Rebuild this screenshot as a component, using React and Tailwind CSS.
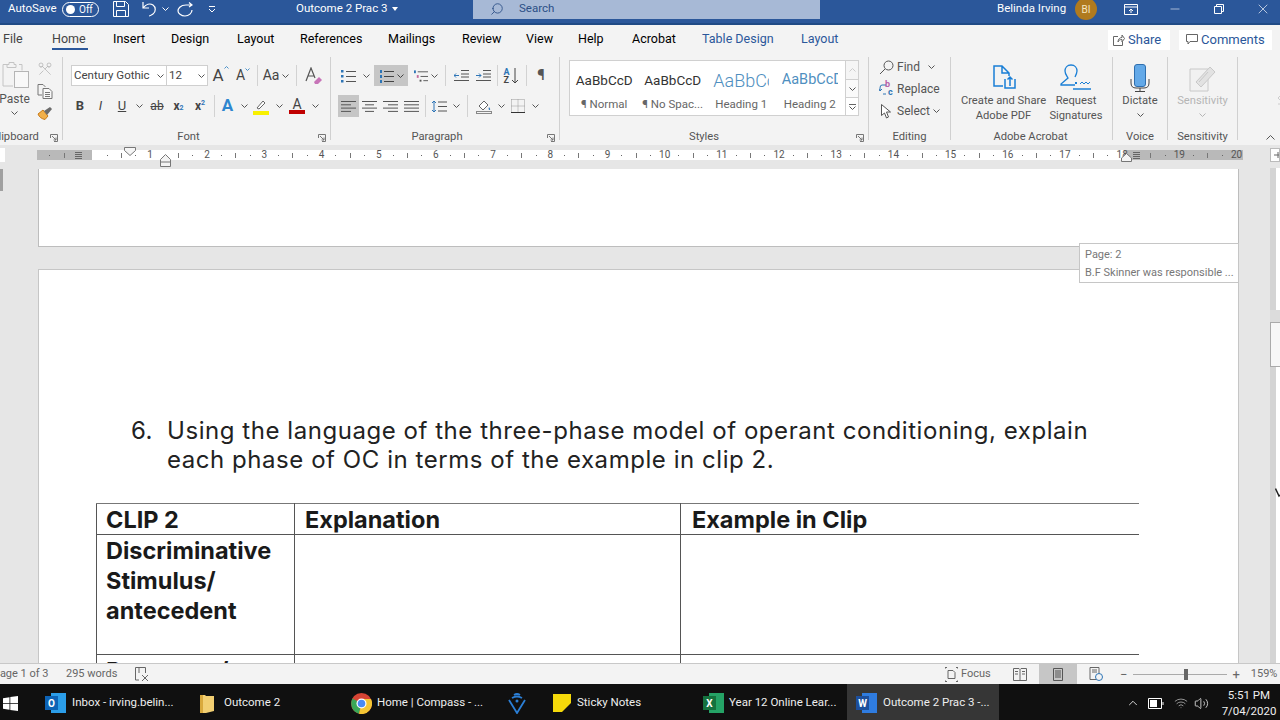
import {
  Scissors,
  Search,
  Minus,
  X,
  ChevronUp,
  Volume2,
  Wifi,
} from "lucide-react";

const ui = { fontFamily: "Roboto, 'Noto Sans', sans-serif" };
const docFont = { fontFamily: "Inter, 'Liberation Sans', sans-serif" };

const Chev = ({ className = "text-[#555]" }) => (
  <svg width="7" height="4" viewBox="0 0 7 4" className={className}>
    <path d="M.5.5l3 3 3-3" fill="none" stroke="currentColor" />
  </svg>
);

const Cell = ({ className = "", children }) => (
  <div className={`flex h-full shrink-0 items-center justify-center ${className}`}>{children}</div>
);

const Sep = ({ className }) => (
  <Cell className={className}>
    <div className="h-full w-px bg-[#d2d2d2]" />
  </Cell>
);

const Launcher = () => (
  <svg width="8" height="8" viewBox="0 0 8 8" className="absolute bottom-[-2px] right-[4px] text-[#777]">
    <path d="M.5 4V.5H7.5V7.5H4M2 2l4 4M6 3.500V6H3.500" fill="none" stroke="currentColor" />
  </svg>
);

// horizontal text lines used by the paragraph buttons
const Lines = ({ rows }) => (
  <svg width="15" height="13" viewBox="0 0 15 13" className="text-[#555]">
    {rows.map(([a, b], i) => (
      <path key={i} d={`M${a} ${1.5 + i * 3.3}H${b}`} stroke="currentColor" />
    ))}
  </svg>
);

const Group = ({ label, className = "", launcher = true, labelClass = "", children }) => (
  <div className={`relative mt-[5px] flex h-[83px] shrink-0 flex-col border-r border-[#d0d0d0] ${className}`}>
    <div className="flex-1">{children}</div>
    <div className={`-mb-[4px] h-[14px] whitespace-nowrap text-center text-[11.200px] leading-[14px] text-[#555] ${labelClass}`}>{label}</div>
    {launcher && <Launcher />}
  </div>
);

const PasteIcon = () => (
  <svg width="28" height="30" viewBox="0 0 28 30" className="text-[#c4c4c4]">
    <path d="M1 4.500h6M17 4.500h3v6M1 4.500V26h10" fill="none" stroke="currentColor" />
    <path d="M7 2.500h5v2h2v3H5v-3h2z" fill="#f3f3f3" stroke="currentColor" />
    <rect x="12.500" y="11.500" width="14" height="16" fill="#f8f8f8" stroke="#b5b5b5" />
  </svg>
);

const CopyIcon = () => (
  <svg width="16" height="15" viewBox="0 0 16 15" className="text-[#777]">
    <path d="M1 .5h5l2 2V3M1 .5V11h4" fill="none" stroke="currentColor" />
    <path d="M6 4.500h6l3 3v7H6zM8 8.500h5M8 10.500h5M8 12.500h5" fill="#f8f8f8" stroke="currentColor" />
  </svg>
);

const BrushIcon = () => (
  <svg width="16" height="15" viewBox="0 0 16 15">
    <path d="M1 8l5-4 5 6-3 3.500C5 13 2 11 1 8z" fill="#f2b04a" stroke="#c77a18" />
    <path d="M7 5l6-4 2 2-5 6z" fill="#6b6b6b" />
  </svg>
);

const SmallA = ({ big, up }) => (
  <span className={`relative text-[#444] ${big ? "text-[17px]" : "text-[14px]"}`}>
    A
    <svg width="5" height="3" viewBox="0 0 5 3" className="absolute right-[-5px] top-[3px] text-[#4a90c8]">
      <path d={up ? "M.5 2.500l2-2 2 2" : "M.5.5l2 2 2-2"} fill="none" stroke="currentColor" />
    </svg>
  </span>
);

const BulletIcon = () => (
  <svg width="15" height="14" viewBox="0 0 15 14">
    {[1, 6, 11].map((y) => (
      <g key={y}>
        <rect x="0" y={y} width="2.500" height="2.500" fill="#2e75b6" />
        <path d={`M5 ${y + 1.5}H15`} stroke="#555" />
      </g>
    ))}
  </svg>
);

const NumberIcon = () => (
  <svg width="15" height="14" viewBox="0 0 15 14">
    {[1, 6, 11].map((y) => (
      <g key={y}>
        <rect x="1" y={y} width="2" height="3" fill="#2e75b6" />
        <path d={`M5 ${y + 1.5}H15`} stroke="#444" />
      </g>
    ))}
  </svg>
);

const MultiIcon = () => (
  <svg width="15" height="14" viewBox="0 0 15 14">
    <rect x="0" y="1" width="2" height="3" fill="#2e75b6" />
    <rect x="3" y="6" width="2" height="3" fill="#c06a9a" />
    <rect x="6" y="11" width="2" height="2" fill="#555" />
    <path d="M4 2.500H15M7 7.500H15M10 12H15" stroke="#555" />
  </svg>
);

const IndentIcon = ({ flip }) => (
  <svg width="15" height="11" viewBox="0 0 15 11">
    <path d="M7 .5H15M7 4H15M7 7H15M0 10.500H15" stroke="#555" />
    <path d={flip ? "M0 5.500h5M3 3.500l2 2-2 2" : "M5 5.500H0M2 3.500l-2 2 2 2"} fill="none" stroke="#2e75b6" />
  </svg>
);

const SortIcon = () => (
  <div className="relative flex items-center">
    <div className="flex flex-col text-[9px] font-bold leading-[8px]">
      <span className="text-[#2e75b6]">A</span>
      <span className="text-[#444]">Z</span>
    </div>
    <svg width="8" height="16" viewBox="0 0 8 16" className="ml-[1px]">
      <path d="M4 0v15M1 12l3 3 3-3" fill="none" stroke="#444" />
    </svg>
  </div>
);

const LineSpaceIcon = () => (
  <svg width="16" height="13" viewBox="0 0 16 13">
    <path d="M3 1v11M1 3l2-2 2 2M1 10l2 2 2-2" fill="none" stroke="#2e75b6" />
    <path d="M7 2H16M7 6.500H16M7 11H16" stroke="#555" />
  </svg>
);

const ShadingIcon = () => (
  <svg width="16" height="15" viewBox="0 0 16 15">
    <path d="M3 7l5-5 4 4-5 5z" fill="#fff" stroke="#666" />
    <path d="M13 8c1 1.500 1.500 2 1 3-1 .5-2-1-1-3z" fill="#2e75b6" />
    <rect x="0.500" y="12.500" width="15" height="2" fill="#f3f3f3" stroke="#888" />
  </svg>
);

const BordersIcon = () => (
  <svg width="14" height="14" viewBox="0 0 14 14">
    <path d="M.5.5h13v13M.5.5v13M7 .5v13M.5 7h13" fill="none" stroke="#999" strokeDasharray="1 1" />
    <path d="M0 13.500h14" stroke="#333" />
  </svg>
);

const FontNameBox = ({ className, text }) => (
  <div className={`flex h-full shrink-0 items-center justify-between border border-[#cfcfcf] bg-white px-[2px] text-[11.500px] text-[#444] ${className}`}>
    <span className="whitespace-nowrap">{text}</span>
    <Chev />
  </div>
);

const FontGroup = () => (
  <Group label="Font" className="w-[268px]" labelClass="pr-[16px]">
    <div className="ml-[8px] mt-[8px] flex h-[21px]">
      <FontNameBox className="w-[96px]" text="Century Gothic" />
      <FontNameBox className="w-[41px] border-l-0" text="12" />
      <Cell className="w-[22px] pr-[2px]">
        <SmallA big up />
      </Cell>
      <Cell className="w-[24px] pr-[3px]">
        <SmallA />
      </Cell>
      <Sep className="w-[7px]" />
      <Cell className="w-[30px] gap-[3px] text-[14px] text-[#444]">
        Aa
        <Chev />
      </Cell>
      <Sep className="w-[11px]" />
      <Cell className="w-[24px]">
        <svg width="18" height="18" viewBox="0 0 18 18">
          <path d="M1 14L6 1l4 10M3 9h6" fill="none" stroke="#555" strokeWidth="1.200" />
          <path d="M9 15l5-5 3 3-4 4h-3z" fill="#c774b8" />
        </svg>
      </Cell>
    </div>
    <div className="ml-[8px] mt-[9px] flex h-[22px] text-[#444]">
      <Cell className="w-[18px] text-[13px] font-bold">B</Cell>
      <Cell className="w-[23px] text-[13px] italic">I</Cell>
      <Cell className="w-[20px] text-[13px] underline">U</Cell>
      <Cell className="w-[14px]">
        <Chev />
      </Cell>
      <Cell className="w-[22px] text-[12px] line-through">ab</Cell>
      <Cell className="w-[21px] text-[12px] font-bold">
        x<sub className="text-[7px] text-[#2e75b6]">2</sub>
      </Cell>
      <Cell className="w-[22px] text-[12px] font-bold">
        x<sup className="text-[7px] text-[#2e75b6]">2</sup>
      </Cell>
      <Sep className="w-[6px]" />
      <Cell className="w-[21px] text-[17px] font-bold text-[#2e86cf]">A</Cell>
      <Cell className="w-[12px]">
        <Chev />
      </Cell>
      <Cell className="w-[22px]">
        <svg width="16" height="17" viewBox="0 0 16 17">
          <path d="M4 10l6-7 2 2-6 6z" fill="#fff" stroke="#666" />
          <rect x="0" y="13" width="16" height="4" fill="#f8f000" />
        </svg>
      </Cell>
      <Cell className="w-[14px]">
        <Chev />
      </Cell>
      <Cell className="w-[22px]">
        <div className="flex flex-col items-center leading-[12px]">
          <span className="text-[14px] text-[#444]">A</span>
          <div className="h-[4px] w-[16px] bg-[#c00000]" />
        </div>
      </Cell>
      <Cell className="w-[14px]">
        <Chev />
      </Cell>
    </div>
  </Group>
);

const ParagraphGroup = () => (
  <Group label="Paragraph" className="w-[229px]" labelClass="pr-[16px]">
    <div className="ml-[7px] mt-[8px] flex h-[21px]">
      <Cell className="w-[20px]">
        <BulletIcon />
      </Cell>
      <Cell className="w-[16px]">
        <Chev />
      </Cell>
      <Cell className="w-[34px] gap-[3px] bg-[#c6c6c6]">
        <NumberIcon />
        <Chev className="text-[#444]" />
      </Cell>
      <Cell className="ml-[6px] w-[14px]">
        <MultiIcon />
      </Cell>
      <Cell className="w-[12px]">
        <Chev />
      </Cell>
      <Sep className="w-[10px]" />
      <Cell className="w-[22px]">
        <IndentIcon />
      </Cell>
      <Cell className="w-[22px]">
        <IndentIcon flip />
      </Cell>
      <Sep className="w-[6px]" />
      <Cell className="w-[22px]">
        <SortIcon />
      </Cell>
      <Sep className="w-[8px]" />
      <Cell className="w-[22px] text-[15px] font-bold text-[#555]">¶</Cell>
    </div>
    <div className="ml-[7px] mt-[9px] flex h-[22px]">
      <Cell className="w-[21px] bg-[#c6c6c6]">
        <Lines rows={[[0, 15], [0, 10], [0, 15], [0, 10]]} />
      </Cell>
      <Cell className="w-[21px]">
        <Lines rows={[[0, 15], [3, 12], [0, 15], [3, 12]]} />
      </Cell>
      <Cell className="w-[21px]">
        <Lines rows={[[0, 15], [5, 15], [0, 15], [5, 15]]} />
      </Cell>
      <Cell className="w-[21px]">
        <Lines rows={[[0, 15], [0, 15], [0, 15], [0, 15]]} />
      </Cell>
      <Sep className="w-[6px]" />
      <Cell className="w-[22px]">
        <LineSpaceIcon />
      </Cell>
      <Cell className="w-[12px]">
        <Chev />
      </Cell>
      <Sep className="w-[11px]" />
      <Cell className="w-[22px]">
        <ShadingIcon />
      </Cell>
      <Cell className="w-[12px]">
        <Chev />
      </Cell>
      <Cell className="w-[22px]">
        <BordersIcon />
      </Cell>
      <Cell className="w-[12px]">
        <Chev />
      </Cell>
    </div>
  </Group>
);

const StyleItem = ({ preview, previewClass, label }) => (
  <div className="flex w-[68.500px] shrink-0 flex-col items-center">
    <div className={`flex h-[28px] items-center overflow-hidden whitespace-nowrap ${previewClass}`}>{preview}</div>
    <div className="mt-[3px] whitespace-nowrap text-[11.500px] leading-[14px] text-[#666]">{label}</div>
  </div>
);

const StylesGroup = () => (
  <Group label="Styles" className="w-[309px]" labelClass="pr-[20px]">
    <div className="ml-[9px] mt-[3px] flex h-[56px] w-[290px] border border-[#d0d0d0] bg-white">
      <div className="flex flex-1 items-start pt-[5px]">
        <StyleItem preview="AaBbCcD" previewClass="w-[60px] justify-center text-[13.500px] text-[#333]" label="¶ Normal" />
        <StyleItem preview="AaBbCcD" previewClass="w-[60px] justify-center text-[13.500px] text-[#333]" label="¶ No Spac..." />
        <StyleItem preview="AaBbCcD" previewClass="w-[56px] text-[18px] font-light text-[#4f8fc0]" label="Heading 1" />
        <StyleItem preview="AaBbCcD" previewClass="w-[56px] text-[14.500px] text-[#4f8fc0]" label="Heading 2" />
      </div>
      <div className="flex w-[13px] flex-col border-l border-[#d0d0d0] text-[#777]">
        <div className="flex h-[18px] items-center justify-center bg-[#f5f5f5]">
          <svg width="7" height="4" viewBox="0 0 7 4" className="text-[#ccc]">
            <path d="M.5 3.500l3-3 3 3" fill="none" stroke="currentColor" />
          </svg>
        </div>
        <div className="flex h-[19px] items-center justify-center border-y border-[#d0d0d0] bg-[#fafafa]">
          <Chev />
        </div>
        <div className="flex flex-1 flex-col items-center justify-center gap-[1px]">
          <div className="h-px w-[7px] bg-[#666]" />
          <Chev />
        </div>
      </div>
    </div>
  </Group>
);

const FindIcon = () => (
  <svg width="15" height="15" viewBox="0 0 15 15">
    <circle cx="9.500" cy="5.500" r="4.500" fill="none" stroke="#555" />
    <path d="M6 9L1 14" stroke="#555" />
  </svg>
);

const ReplaceIcon = () => (
  <div className="relative flex h-[14px] w-[15px] items-center text-[9px] font-bold leading-none">
    <svg width="8" height="11" viewBox="0 0 8 11">
      <path d="M7 1H3Q1 1 1 4v3M1 7l2-2M1 7l-1-2M7 10H4" fill="none" stroke="#2e75b6" />
    </svg>
    <span className="absolute left-[6px] top-[-2px] text-[#b660a8]">b</span>
    <span className="absolute left-[9px] top-[6px] text-[#2e75b6]">c</span>
  </div>
);

const SelectIcon = () => (
  <svg width="11" height="15" viewBox="0 0 11 15">
    <path d="M.5.5v11l3-2.500 2 5 2-1-2-5h4z" fill="#fff" stroke="#555" />
  </svg>
);

const EditRow = ({ icon, text, chev, chevClass = "ml-[3px]" }) => (
  <div className="flex h-[22px] items-center text-[12px] text-[#555]">
    <div className="flex w-[17px] shrink-0 justify-center">{icon}</div>
    <span className="ml-[2px]">{text}</span>
    {chev && (
      <span className={chevClass}>
        <Chev />
      </span>
    )}
  </div>
);

const EditingGroup = () => (
  <Group label="Editing" className="w-[82px]" launcher={false}>
    <div className="mt-[-1px] pl-[9px]">
      <EditRow icon={<FindIcon />} text="Find" chev chevClass="ml-[8px]" />
      <EditRow icon={<ReplaceIcon />} text="Replace" />
      <EditRow icon={<SelectIcon />} text="Select" chev />
    </div>
  </Group>
);

const BigLabel = ({ children, className = "text-[#555]" }) => (
  <div className={`whitespace-nowrap text-center text-[11.200px] leading-[15px] ${className}`}>{children}</div>
);

const PdfIcon = () => (
  <svg width="24" height="26" viewBox="0 0 24 26" fill="none" stroke="#1a7fd6" strokeWidth="1.500">
    <path d="M11 21H2V1h8l7 7v3M10 1v7h7" />
    <path d="M13 14v9h10v-9M18 21v-9M15.500 14.500l2.500-2.500 2.500 2.500" />
  </svg>
);

const SignIcon = () => (
  <svg width="32" height="27" viewBox="0 0 32 27" fill="none" stroke="#1a7fd6" strokeWidth="1.300">
    <path d="M11 1c-4 0-6 3-6 6 0 3 2 5 3 7l-7 6v1h14M11 1c4 0 6 3 6 6 0 2-1 4-2 6" />
    <path d="M15 18l2 2M17 18l-2 2M20 20l2-2 2 2 2-2 2 2 2-2" strokeWidth="1" />
    <path d="M13 25h18" strokeWidth="1.500" />
  </svg>
);

const AdobeGroup = () => (
  <Group label="Adobe Acrobat" className="w-[162px]" launcher={false} labelClass="pr-[2px]">
    <div className="flex pt-[5px]">
      <div className="flex w-[105px] flex-col items-center">
        <div className="flex h-[31px] items-center">
          <PdfIcon />
        </div>
        <BigLabel>Create and Share</BigLabel>
        <BigLabel>Adobe PDF</BigLabel>
      </div>
      <div className="flex w-[40px] flex-col items-center">
        <div className="flex h-[31px] items-center">
          <SignIcon />
        </div>
        <BigLabel>Request</BigLabel>
        <BigLabel>Signatures</BigLabel>
      </div>
    </div>
  </Group>
);

const VoiceGroup = () => (
  <Group label="Voice" className="w-[55px]" launcher={false}>
    <div className="flex flex-col items-center pt-[5px]">
      <div className="flex h-[31px] items-center">
        <svg width="20" height="28" viewBox="0 0 20 28">
          <rect x="4.500" y="0.500" width="11" height="22" rx="2.500" fill="#63a9e8" stroke="#2f6fae" />
          <path d="M1 15v4q0 5 5 5h8q5 0 5-5v-4M10 24v3M5 27.500h10" fill="none" stroke="#444" />
        </svg>
      </div>
      <BigLabel>Dictate</BigLabel>
      <div className="mt-[5px]">
        <Chev />
      </div>
    </div>
  </Group>
);

const SensitivityGroup = () => (
  <Group label="Sensitivity" className="w-[70px]" launcher={false}>
    <div className="flex flex-col items-center pt-[5px]">
      <div className="flex h-[31px] items-center">
        <svg width="27" height="28" viewBox="0 0 27 28" fill="none" stroke="#c8c8c8">
          <path d="M3 5h16v22H1V5z" fill="#f1f1f1" />
          <path d="M7 18L21 3l5 5-14 15z" fill="#e2e2e2" />
          <path d="M10 18l9-10" />
        </svg>
      </div>
      <BigLabel className="text-[#b5b5b5]">Sensitivity</BigLabel>
      <div className="mt-[5px]">
        <Chev className="text-[#b5b5b5]" />
      </div>
    </div>
  </Group>
);

const TitleBar = () => (
  <div className="flex h-[25px] shrink-0 items-start border-b-[2px] border-[#204a85] bg-[#2b579a] text-[11.500px] text-white">
    <div className="flex h-[18px] items-center pl-[8px]">
      <span className="w-[54px]">AutoSave</span>
      <div className="flex h-[15px] w-[37px] items-center gap-[4px] rounded-full border border-white pl-[3px] text-[10px]">
        <div className="h-[9px] w-[9px] rounded-full bg-white" />
        Off
      </div>
      <svg width="16" height="16" viewBox="0 0 16 16" className="ml-[14px]" fill="none" stroke="white">
        <path d="M.5.5h12l3 3v12H.5zM3.500.5v5h8v-5M3.500 15.500v-6h9v6" />
      </svg>
      <svg width="16" height="16" viewBox="0 0 16 16" className="ml-[13px]" fill="none" stroke="white" strokeWidth="1.200">
        <path d="M1 1v6h6M1 7c3-4 7-5 10-3s3 7 0 9-3 2-4 2" />
      </svg>
      <span className="ml-[4px]">
        <Chev className="text-white" />
      </span>
      <svg width="16" height="16" viewBox="0 0 16 16" className="ml-[8px]" fill="none" stroke="white" strokeWidth="1.200">
        <path d="M12 1.500L15 4l-3 2M15 4H9C3 4 1 8 1 10s3 5 7 5 7-3 7-6" />
      </svg>
      <svg width="8" height="7" viewBox="0 0 8 7" className="ml-[15px]" fill="none" stroke="white">
        <path d="M1 .5h6M1 3l3 3 3-3" />
      </svg>
    </div>
    <div className="ml-[80px] flex h-[18px] w-[177px] items-center gap-[5px]">
      <span>Outcome 2 Prac 3</span>
      <svg width="6" height="4" viewBox="0 0 6 4">
        <path d="M0 0h6L3 4z" fill="white" />
      </svg>
    </div>
    <div className="flex h-[19px] w-[347px] items-center bg-[#a7b9d6] pb-[2px] pl-[17px] text-[#2b4f86]">
      <Search size={14} className="-scale-x-100" strokeWidth={1.500} />
      <span className="ml-[15px] text-[11.500px]">Search</span>
    </div>
    <div className="ml-[177px] flex h-[18px] items-center">
      <span className="w-[78px] whitespace-nowrap">Belinda Irving</span>
      <div className="flex h-[22px] w-[22px] items-center justify-center rounded-full bg-[#b07a1e] text-[10px] text-[#f6e6c0]">BI</div>
      <svg width="14" height="11" viewBox="0 0 14 11" className="ml-[27px]" fill="none" stroke="white">
        <path d="M.5.500h13v10H.5zM.5 3h13M7 9V5M5 7l2-2 2 2" />
      </svg>
      <Minus size={14} className="ml-[30px]" strokeWidth={1} />
      <svg width="10" height="10" viewBox="0 0 10 10" className="ml-[32px]" fill="none" stroke="white">
        <path d="M.5 2.500h7v7h-7zM2.500 2.500v-2h7v7h-2" />
      </svg>
      <X size={16} className="ml-[31px]" strokeWidth={1} />
    </div>
  </div>
);

const Tab = ({ className = "text-[#444]", children }) => (
  <span className={`shrink-0 ${className}`}>{children}</span>
);

const TabsRow = () => (
  <div className="flex h-[27px] shrink-0 items-center bg-[#f3f3f3] pt-[2px] text-[12.500px]">
    <Tab className="ml-[3px] w-[49px] text-[#444]">File</Tab>
    <div className="relative w-[61px]">
      <span className="text-[#444]">Home</span>
      <div className="absolute left-0 top-[18px] h-[2px] w-[36px] bg-[#2b579a]" />
    </div>
    <Tab className="w-[58px]">Insert</Tab>
    <Tab className="w-[66px]">Design</Tab>
    <Tab className="w-[63px]">Layout</Tab>
    <Tab className="w-[88px]">References</Tab>
    <Tab className="w-[74px]">Mailings</Tab>
    <Tab className="w-[64px]">Review</Tab>
    <Tab className="w-[52px]">View</Tab>
    <Tab className="w-[54px]">Help</Tab>
    <Tab className="w-[70px]">Acrobat</Tab>
    <Tab className="w-[99px] text-[#2b579a]">Table Design</Tab>
    <Tab className="w-[307px] text-[#2b579a]">Layout</Tab>
    <div className="flex h-[20px] w-[62px] shrink-0 items-center gap-[3px] bg-white pl-[5px] text-[13px] text-[#2b579a]">
      <svg width="12" height="12" viewBox="0 0 12 12" fill="none" stroke="#666">
        <path d="M5 2.500H.5v9h9V8M5 8c0-3 2-4.500 4-4.500V1l2.500 3.500L9 8V5.500C7 5.500 6 6 5 8z" />
      </svg>
      Share
    </div>
    <div className="ml-[9px] flex h-[20px] w-[93px] shrink-0 items-center gap-[3px] bg-white pl-[7px] text-[13px] text-[#2b579a]">
      <svg width="12" height="11" viewBox="0 0 12 11" fill="none" stroke="#666">
        <path d="M.5.500h11v7H4L2 10V7.500H.5z" />
      </svg>
      Comments
    </div>
  </div>
);

const Ribbon = () => (
  <div className="flex h-[93px] shrink-0 bg-[#f3f3f3]">
    <Group label="Clipboard" className="w-[63px]" labelClass="ml-[-32px]">
      <div className="flex">
        <div className="flex w-[29px] flex-col items-center">
          <div className="ml-[3px] mt-[3px]">
            <PasteIcon />
          </div>
          <div className="mt-[2px] text-[12px] leading-[15px] text-[#555]">Paste</div>
          <div className="mt-[4px]">
            <Chev />
          </div>
        </div>
        <div className="ml-[7px] flex w-[17px] flex-col items-center gap-[7px] pt-[4px]">
          <Scissors size={16} className="rotate-90 text-[#aaa]" strokeWidth={1} />
          <CopyIcon />
          <BrushIcon />
        </div>
      </div>
    </Group>
    <FontGroup />
    <ParagraphGroup />
    <StylesGroup />
    <EditingGroup />
    <AdobeGroup />
    <VoiceGroup />
    <SensitivityGroup />
    <div className="relative flex-1">
      <svg width="4" height="12" viewBox="0 0 4 12" className="absolute left-[39px] top-[42px] text-[#ccc]">
        <path d="M4 1L1 4l3 3M1 10h3" fill="none" stroke="currentColor" />
      </svg>
      <svg width="9" height="5" viewBox="0 0 9 5" className="absolute bottom-[5px] left-[28px] text-[#555]">
        <path d="M.5 4.500l4-4 4 4" fill="none" stroke="currentColor" />
      </svg>
    </div>
  </div>
);

const Dot = () => <div className="h-[1px] w-[1px] bg-[#666]" />;
const Tick = () => <div className="h-[5px] w-px bg-[#777]" />;
const Hatch = () => <div className="h-[7px] w-[7px] bg-[repeating-linear-gradient(0deg,#666_0,#666_1px,transparent_1px,transparent_2px)]" />;

const RulerCell = ({ n }) => (
  <div className="grid w-[57.200px] shrink-0 grid-cols-4 items-center justify-items-center">
    <span className="text-[10px] leading-[10px] text-[#555]">{n}</span>
    {n === 18 ? <Hatch /> : <Dot />}
    <Tick />
    <Dot />
  </div>
);

const RULER_NUMBERS = Array.from({ length: 19 }, (_, i) => i + 1);

const Ruler = () => (
  <div className="relative h-[23px] shrink-0 bg-[#e6e6e6] pt-[5px]">
    <div className="absolute left-0 top-[3px] h-[14px] w-[5px] bg-white" />
    <div className="ml-[37px] flex h-[10px] w-[1206px] bg-[linear-gradient(90deg,#b9b9b9_55px,#fff_55px,#fff_1087px,#b9b9b9_1087px)] pl-[5.750px]">
      <div className="grid w-[100.100px] shrink-0 grid-cols-7 items-center justify-items-center">
        <Dot />
        <Tick />
        <Hatch />
        <span />
        <Dot />
        <Tick />
        <Dot />
      </div>
      {RULER_NUMBERS.map((n) => (
        <RulerCell key={n} n={n} />
      ))}
      <span className="w-[14.300px] shrink-0 text-center text-[10px] leading-[10px] text-[#555]">20</span>
    </div>
    {/* indent markers sit on top of the ruler */}
    <svg width="12" height="9" viewBox="0 0 12 9" className="absolute left-[124px] top-[2px]">
      <path d="M.5.500h11v3l-5.500 5-5.500-5z" fill="#f5f5f5" stroke="#777" />
    </svg>
    <svg width="11" height="13" viewBox="0 0 11 13" className="absolute left-[160px] top-[9px]">
      <path d="M.5 5.500l5-5 5 5v7H.5zM.5 8h10" fill="#f3f3f3" stroke="#777" />
    </svg>
    <svg width="11" height="9" viewBox="0 0 11 9" className="absolute left-[1121px] top-[8px]">
      <path d="M.5 5l5-4.500 5 4.500v3.500H.5z" fill="#f5f5f5" stroke="#777" />
    </svg>
    <div className="absolute left-[1270px] top-[3px] flex h-[14px] w-[10px] items-center border border-[#bbb] bg-white pl-[3px]">
      <svg width="5" height="6" viewBox="0 0 5 6">
        <path d="M4 0v6M0 3h5" stroke="#666" />
      </svg>
    </div>
  </div>
);

const Td = ({ className = "", children }) => (
  <td className={`h-[30px] border border-[#555] border-t-[#777] ${className}`}>{children}</td>
);

const DocTable = () => (
  <table className="ml-[57px] mt-[28px] w-[1042px] table-fixed border-collapse text-[23.500px] font-bold text-[#1a1a1a]" style={docFont}>
    <colgroup>
      <col className="w-[198px]" />
      <col className="w-[386px]" />
      <col className="w-[458px]" />
    </colgroup>
    <tbody>
      <tr className="leading-[28px]">
        <Td className="pl-[9px] pt-[2px]">CLIP 2</Td>
        <Td className="pl-[10px] pt-[2px]">Explanation</Td>
        <Td className="border-r-0 pl-[11px] pt-[2px]">Example in Clip</Td>
      </tr>
      <tr className="leading-[30px]">
        <Td className="h-[120px] pl-[9px] pt-[1px] align-top">
          Discriminative
          <br />
          Stimulus/
          <br />
          antecedent
        </Td>
        <Td />
        <Td className="border-r-0" />
      </tr>
      <tr className="leading-[30px]">
        <Td className="pl-[9px] pt-[1px] align-top">
          <div className="h-[8px] overflow-hidden">Response/</div>
        </Td>
        <Td />
        <Td className="border-r-0" />
      </tr>
    </tbody>
  </table>
);

const Document = () => (
  <div className="relative flex min-h-0 flex-1 bg-[#e6e6e6]">
    <div className="absolute left-0 top-[1px] h-[22px] w-[3px] bg-[#a0a0a0]" />
    <div className="flex w-[1270px] flex-col overflow-hidden pl-[38px] pr-[31px] pt-px">
      <div className="h-[78px] shrink-0 border-x border-b border-[#bdbdbd] bg-white" />
      <div className="mt-[22px] shrink-0 border-x border-t border-[#c6c6c6] bg-white pb-[200px]">
        <div className="ml-[92px] mt-[146px] flex w-[980px] text-[24px] leading-[29.400px] tracking-[0.55px] text-[#222]" style={docFont}>
          <span className="w-[36px] shrink-0">6.</span>
          <p>Using the language of the three-phase model of operant conditioning, explain each phase of OC in terms of the example in clip 2.</p>
        </div>
        <DocTable />
      </div>
    </div>
    {/* scrollbar and the window peeking out beside it */}
    <div className="relative w-[6px] bg-[#d4d4d4]" />
    <div className="w-[4px] bg-white" />
    <div className="absolute left-[1270px] top-[142px] h-[12px] w-[10px] bg-[#dcdcdc]" />
    <div className="absolute left-[1270px] top-[154px] h-[45px] w-[10px] border border-r-0 border-[#aaa] bg-[#f7f7f7]" />
    <svg width="5" height="12" viewBox="0 0 5 12" className="absolute left-[1275px] top-[320px]">
      <path d="M.5.500L4 8l1-1" fill="none" stroke="#222" strokeWidth="1.500" />
    </svg>
    {/* page hover tip */}
    <div className="absolute left-[1079px] top-[75px] h-[40px] w-[160px] border border-[#c6c6c6] bg-white px-[5px] pt-[2px] text-[11px] leading-[18px] text-[#777]">
      <div>Page: 2</div>
      <div className="whitespace-nowrap">B.F Skinner was responsible ...</div>
    </div>
  </div>
);

const StatusBar = () => (
  <div className="flex h-[21px] shrink-0 items-center border-t border-[#c8c8c8] bg-[#f3f3f3] text-[11px] text-[#666]">
    <span className="ml-[-7px] w-[73px] shrink-0 whitespace-nowrap">Page 1 of 3</span>
    <span className="w-[69px] shrink-0 whitespace-nowrap">295 words</span>
    <svg width="14" height="15" viewBox="0 0 14 15" fill="none" stroke="#666" className="shrink-0">
      <path d="M.5 13V.5h10V6M4 .5V6M.5 13H4M7 8l6 6M13 8l-6 6" />
    </svg>
    <svg width="13" height="15" viewBox="0 0 13 15" className="ml-[796px] shrink-0" fill="none" stroke="#666">
      <path d="M3 3.500h5l2 2v6H3zM0 2V.5h2M11 .5h2V2M0 13v1.500h2M11 14.500h2V13" />
    </svg>
    <span className="ml-[3px] w-[52px] shrink-0">Focus</span>
    <svg width="14" height="13" viewBox="0 0 14 13" fill="none" stroke="#666" className="shrink-0">
      <path d="M.5.500H6L7 1.500 8 .5h5.500v12H.5zM7 1.500v11M2 3.500h3M2 6h3M9 3.500h3M9 6h3" />
    </svg>
    <Cell className="ml-[12px] w-[38px] bg-[#c6c6c6]">
      <svg width="10" height="13" viewBox="0 0 10 13" fill="none" stroke="#555">
        <path d="M.5.500h9v12h-9zM2 3h6M2 5h6M2 7h6M2 9h6" />
      </svg>
    </Cell>
    <svg width="14" height="14" viewBox="0 0 14 14" className="ml-[12px] shrink-0" fill="none" stroke="#666">
      <path d="M1 .5h9v12H1zM3 3h5M3 5h5" />
      <circle cx="10" cy="10" r="3.500" fill="#f3f3f3" stroke="#2e75b6" />
    </svg>
    <span className="ml-[17px] text-[13px] leading-none">−</span>
    <div className="relative ml-[6px] h-px w-[94px] shrink-0 bg-[#aaa]">
      <div className="absolute left-[51px] top-[-5px] h-[11px] w-[4px] bg-[#666]" />
    </div>
    <span className="ml-[5px] text-[13px] leading-none">+</span>
    <span className="ml-[11px] shrink-0 whitespace-nowrap">159%</span>
  </div>
);

const AppTile = ({ from, to, letter }) => (
  <div className="relative h-[20px] w-[21px] shrink-0">
    <div className={`absolute inset-y-0 right-0 w-[15px] ${to}`} />
    <div className={`absolute left-0 top-[3px] flex h-[14px] w-[13px] items-center justify-center text-[10px] font-bold text-white ${from}`}>{letter}</div>
  </div>
);

const TaskItem = ({ className = "", gap = "ml-[6px]", icon, text }) => (
  <div className={`flex h-full shrink-0 items-center whitespace-nowrap pt-[2px] ${className}`}>
    {icon}
    <span className={gap}>{text}</span>
  </div>
);

const ChromeIcon = () => (
  <svg width="21" height="21" viewBox="0 0 21 21">
    <circle cx="10.500" cy="10.500" r="10.500" fill="#d64434" />
    <path d="M10.500 10.500L1.500 5.500A10.500 10.500 0 0 0 8 20.700z" fill="#3aa757" />
    <path d="M10.500 10.500L8 20.700A10.500 10.500 0 0 0 20 6H10.500z" fill="#f4c534" />
    <circle cx="10.500" cy="10.500" r="5" fill="#fff" />
    <circle cx="10.500" cy="10.500" r="3.800" fill="#4a8af4" />
  </svg>
);

const Taskbar = () => (
  <div className="flex h-[36px] shrink-0 items-center bg-[#101010] text-[11.500px] text-[#eeeeee]">
    <svg width="15" height="15" viewBox="0 0 15 15" className="ml-[3px] mt-[2px]">
      <path d="M0 2.200l6.500-1v6H0zM7.300 1l7.700-1v7.200H7.300zM0 8h6.500v5.800l-6.500-1zM7.300 8H15v7l-7.700-1z" fill="white" />
    </svg>
    <TaskItem
      className="ml-[27px] w-[155px]"
      icon={<AppTile letter="O" from="bg-[#0d63b5]" to="bg-[#2b9de8]" />}
      text="Inbox - irving.belin..."
    />
    <TaskItem
      className="w-[151px]"
      gap="ml-[10px]"
      icon={
        <svg width="14" height="19" viewBox="0 0 14 19">
          <path d="M0 1h5l1 1h8v15l-8 2H0z" fill="#f2cf72" />
          <path d="M0 1h3v18H0z" fill="#d9a93c" />
        </svg>
      }
      text="Outcome 2"
    />
    <TaskItem className="w-[157px]" gap="ml-[5px]" icon={<ChromeIcon />} text="Home | Compass - ..." />
    <div className="flex h-full w-[45px] shrink-0 items-center pt-[2px]">
      <svg width="18" height="22" viewBox="0 0 18 22" fill="none" stroke="#2b7fd6" strokeWidth="1.800">
        <path d="M1 8l8 13 8-13M6 3q3-2 6 0M4 6q5-3 10 0" />
        <circle cx="9" cy="9" r="1.500" fill="#2b7fd6" stroke="none" />
      </svg>
    </div>
    <TaskItem
      className="w-[150px]"
      icon={
        <svg width="18" height="18" viewBox="0 0 18 18">
          <rect width="18" height="18" fill="#f5d90a" />
          <path d="M18 9v9H9z" fill="#111" />
        </svg>
      }
      text="Sticky Notes"
    />
    <TaskItem className="w-[144px]" gap="ml-[5px]" icon={<AppTile letter="X" from="bg-[#15723e]" to="bg-[#25a366]" />} text="Year 12 Online Lear..." />
    <div className="flex h-full w-[152px] shrink-0 items-center bg-[#363636] pl-[9px] pt-[2px]">
      <AppTile letter="W" from="bg-[#1d4f9c]" to="bg-[#2f7ce0]" />
      <span className="ml-[6px] whitespace-nowrap">Outcome 2 Prac 3 -...</span>
    </div>
    <ChevronUp size={14} className="ml-[127px] mt-[2px]" strokeWidth={1.500} />
    <svg width="16" height="11" viewBox="0 0 16 11" className="ml-[8px] mt-[2px]" fill="none" stroke="white">
      <path d="M.5.500h13v10H.5zM15 4v3" />
      <rect x="2" y="2" width="7" height="7" fill="white" stroke="none" />
    </svg>
    <Wifi size={14} className="ml-[10px] mt-[2px] text-[#bbb]" strokeWidth={1.300} />
    <Volume2 size={15} className="ml-[6px] mt-[2px]" strokeWidth={1.300} />
    <div className="ml-[10px] flex w-[60px] flex-col items-center pt-[2px] text-[11.500px] leading-[16px]">
      <span>5:51 PM</span>
      <span>7/04/2020</span>
    </div>
  </div>
);

const App = () => (
  <div className="flex h-[720px] w-[1280px] flex-col overflow-hidden" style={ui}>
    <TitleBar />
    <TabsRow />
    <Ribbon />
    <Ruler />
    <Document />
    <StatusBar />
    <Taskbar />
  </div>
);

export default App;
